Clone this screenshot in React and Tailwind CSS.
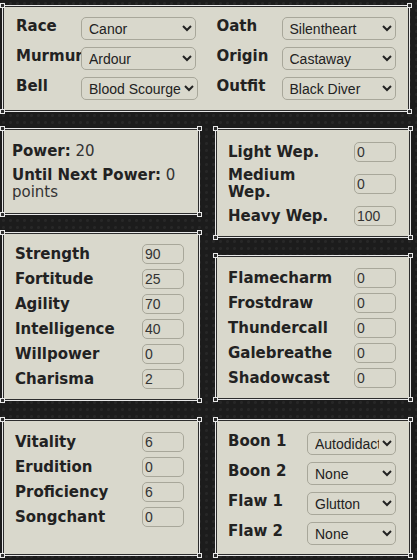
import React from "react";

const label = "font-['DejaVu_Sans',sans-serif] font-bold text-[15px] text-[#222]";
const field =
  "font-['Liberation_Sans',Arial,sans-serif] text-[#222] bg-[#d9d8cc] border border-[#a8a79a] rounded-[5px]";

// white frame with a dark inner line and little corner squares
function Panel({ className = "", children }) {
  return (
    <div
      className={`relative border border-[#e8e8e8] bg-[#d9d8cc] shadow-[inset_0_0_0_1px_#2c2c2c] ${className}`}
    >
      <span className="absolute -left-[3px] -top-[3px] size-[5px] border border-[#e8e8e8] bg-[#2c2c2c]" />
      <span className="absolute -right-[3px] -top-[3px] size-[5px] border border-[#e8e8e8] bg-[#2c2c2c]" />
      <span className="absolute -left-[3px] -bottom-[3px] size-[5px] border border-[#e8e8e8] bg-[#2c2c2c]" />
      <span className="absolute -right-[3px] -bottom-[3px] size-[5px] border border-[#e8e8e8] bg-[#2c2c2c]" />
      {children}
    </div>
  );
}

function SelectRow({ name, value, labelW, selectW }) {
  return (
    <div className="flex items-start">
      <div className={`${label} ${labelW} shrink-0 whitespace-nowrap leading-[18px]`}>
        {name}
      </div>
      <select
        defaultValue={value}
        className={`${field} relative ${selectW} h-[23px] pl-[3px] text-[14px]`}
      >
        <option>{value}</option>
      </select>
    </div>
  );
}

function NumRow({ name, value, labelW, tall }) {
  return (
    <div className={`flex items-center ${tall ? "h-[34px]" : "h-[20px]"}`}>
      <div className={`${label} ${labelW} shrink-0 leading-[17px]`}>{name}</div>
      <input
        type="text"
        defaultValue={value}
        className={`${field} w-[42px] h-[20px] px-[2px] text-[14px] text-[#333] outline-none`}
      />
    </div>
  );
}

const attributes = [
  ["Strength", 90],
  ["Fortitude", 25],
  ["Agility", 70],
  ["Intelligence", 40],
  ["Willpower", 0],
  ["Charisma", 2],
];

const elements = ["Flamecharm", "Frostdraw", "Thundercall", "Galebreathe", "Shadowcast"];

const extras = [
  ["Vitality", 6],
  ["Erudition", 0],
  ["Proficiency", 6],
  ["Songchant", 0],
];

const traits = [
  ["Boon 1", "Autodidact"],
  ["Boon 2", "None"],
  ["Flaw 1", "Glutton"],
  ["Flaw 2", "None"],
];

export default function App() {
  return (
    <div className="min-h-screen bg-[#1c1c1c] bg-[radial-gradient(circle,#272727_1px,transparent_2px)] bg-[length:7px_7px] pl-[2px] pt-[5px] pb-[4px]">
      <div className="w-[409px]">
        {/* ORIGIN */}
        <Panel className="w-[408px] px-[13px] pt-[11px] pb-[11px]">
          <div className="grid grid-cols-2 gap-x-[21px] gap-y-[7px]">
            <SelectRow name="Race" value="Canor" labelW="w-[65px]" selectW="flex-1" />
            <SelectRow name="Oath" value="Silentheart" labelW="w-[65px]" selectW="flex-1" />
            <SelectRow name="Murmur" value="Ardour" labelW="w-[65px]" selectW="flex-1" />
            <SelectRow name="Origin" value="Castaway" labelW="w-[65px]" selectW="flex-1" />
            <SelectRow name="Bell" value="Blood Scourge" labelW="w-[65px]" selectW="flex-1" />
            <SelectRow name="Outfit" value="Black Diver" labelW="w-[65px]" selectW="flex-1" />
          </div>
        </Panel>

        <div className="mt-[16px] grid grid-cols-[198px_196px] gap-x-[15px] items-start">
          {/* LEFT COLUMN */}
          <div className="flex flex-col gap-[17px]">
            <Panel className="pl-[9px] pr-[6px] pt-[14px] pb-[13px] font-['DejaVu_Sans',sans-serif] text-[15px] leading-[17px] text-[#333]">
              <p>
                <span className="font-bold text-[#222]">Power:</span> 20
              </p>
              <p className="mt-[7px]">
                <span className="font-bold text-[#222]">Until Next Power:</span> 0 points
              </p>
            </Panel>

            <Panel className="pl-[12px] pt-[11px] pb-[11px]">
              <div className="flex flex-col gap-[5px]">
                {attributes.map(([n, v]) => (
                  <NumRow key={n} name={n} value={v} labelW="w-[127px]" />
                ))}
              </div>
            </Panel>
          </div>

          {/* RIGHT COLUMN */}
          <div className="flex flex-col gap-[17px]">
            <Panel className="pl-[12px] pt-[13px] pb-[11px]">
              <div className="flex flex-col gap-[5px]">
                <NumRow name="Light Wep." value={0} labelW="w-[126px] pr-[21px]" />
                <NumRow name="Medium Wep." value={0} labelW="w-[126px] pr-[21px]" tall />
                <NumRow name="Heavy Wep." value={100} labelW="w-[126px] pr-[21px]" />
              </div>
            </Panel>

            <Panel className="pl-[12px] pt-[12px] pb-[11px]">
              <div className="flex flex-col gap-[5px]">
                {elements.map((n) => (
                  <NumRow key={n} name={n} value={0} labelW="w-[126px]" />
                ))}
              </div>
            </Panel>
          </div>
        </div>

        {/* BOTTOM ROW */}
        <div className="mt-[18px] grid grid-cols-[198px_196px] gap-x-[15px]">
          <Panel className="pl-[12px] pt-[12px] pb-[10px]">
            <div className="flex flex-col gap-[5px]">
              {extras.map(([n, v]) => (
                <NumRow key={n} name={n} value={v} labelW="w-[127px]" />
              ))}
            </div>
          </Panel>

          <Panel className="pl-[12px] pt-[12px] pb-[10px]">
            <div className="flex flex-col gap-[7px]">
              {traits.map(([n, v]) => (
                <SelectRow key={n} name={n} value={v} labelW="w-[79px]" selectW="w-[89px]" />
              ))}
            </div>
          </Panel>
        </div>
      </div>
    </div>
  );
}
